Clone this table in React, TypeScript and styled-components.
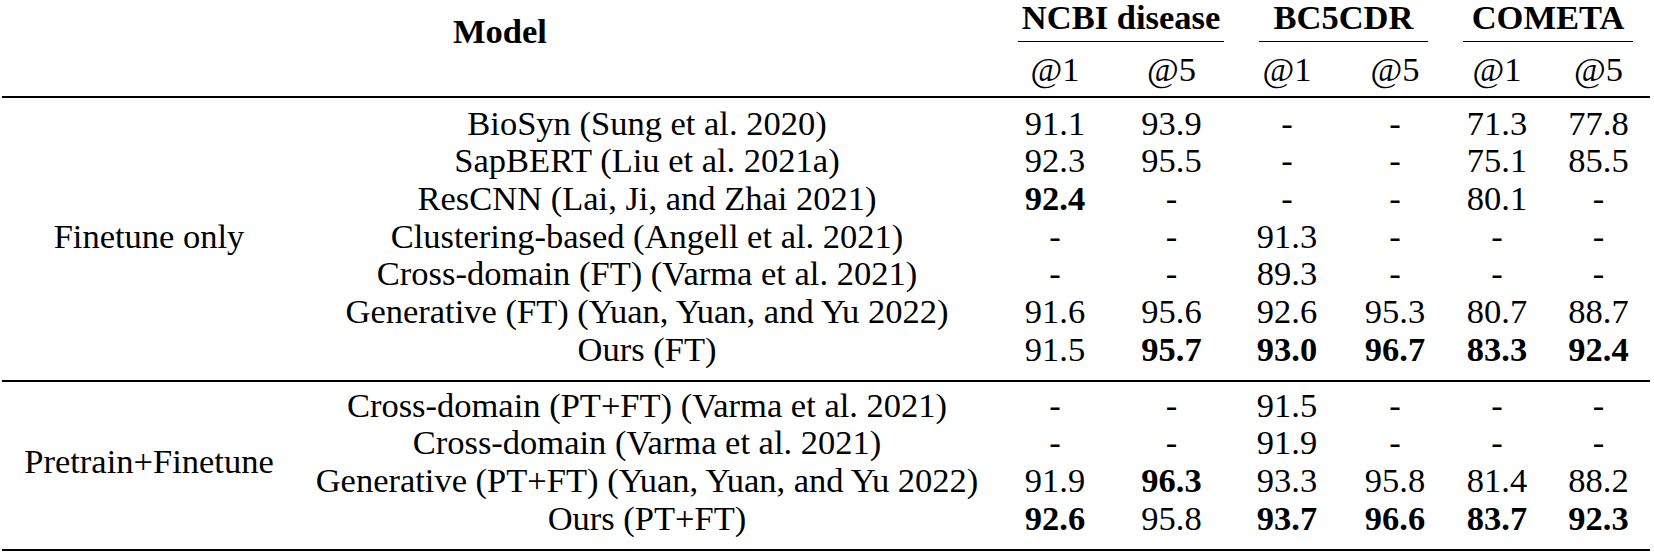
import React from 'react';
import styled, { createGlobalStyle } from 'styled-components';

const COLUMNS = '294px 702px 114px 119px 112px 104px 100px 103px';

type Row = { name: string; scores: string[]; bold?: number[] };
type Group = { label: string; padTop: number; padBottom: number; rows: Row[] };

const DATASETS = [
  { name: 'NCBI disease', ml: 20, mr: 7 },
  { name: 'BC5CDR', ml: 28, mr: 19 },
  { name: 'COMETA', ml: 16, mr: 17 },
];

const GROUPS: Group[] = [
  {
    label: 'Finetune only',
    padTop: 7,
    padBottom: 11,
    rows: [
      { name: 'BioSyn (Sung et al. 2020)', scores: ['91.1', '93.9', '-', '-', '71.3', '77.8'] },
      { name: 'SapBERT (Liu et al. 2021a)', scores: ['92.3', '95.5', '-', '-', '75.1', '85.5'] },
      { name: 'ResCNN (Lai, Ji, and Zhai 2021)', scores: ['92.4', '-', '-', '-', '80.1', '-'], bold: [0] },
      { name: 'Clustering-based (Angell et al. 2021)', scores: ['-', '-', '91.3', '-', '-', '-'] },
      { name: 'Cross-domain (FT) (Varma et al. 2021)', scores: ['-', '-', '89.3', '-', '-', '-'] },
      {
        name: 'Generative (FT) (Yuan, Yuan, and Yu 2022)',
        scores: ['91.6', '95.6', '92.6', '95.3', '80.7', '88.7'],
      },
      { name: 'Ours (FT)', scores: ['91.5', '95.7', '93.0', '96.7', '83.3', '92.4'], bold: [1, 2, 3, 4, 5] },
    ],
  },
  {
    label: 'Pretrain+Finetune',
    padTop: 5,
    padBottom: 12,
    rows: [
      { name: 'Cross-domain (PT+FT) (Varma et al. 2021)', scores: ['-', '-', '91.5', '-', '-', '-'] },
      { name: 'Cross-domain (Varma et al. 2021)', scores: ['-', '-', '91.9', '-', '-', '-'] },
      {
        name: 'Generative (PT+FT) (Yuan, Yuan, and Yu 2022)',
        scores: ['91.9', '96.3', '93.3', '95.8', '81.4', '88.2'],
        bold: [1],
      },
      { name: 'Ours (PT+FT)', scores: ['92.6', '95.8', '93.7', '96.6', '83.7', '92.3'], bold: [0, 2, 3, 4, 5] },
    ],
  },
];

const App = () => {
  return (
    <>
      <GlobalStyle />
      <Page>
        <Table>
          <Header>
            <ModelHead>Model</ModelHead>
            {DATASETS.map((d) => (
              <DatasetHead key={d.name} $ml={d.ml} $mr={d.mr}>
                {d.name}
              </DatasetHead>
            ))}
            {DATASETS.map((d) => (
              <React.Fragment key={d.name}>
                <MetricHead>@1</MetricHead>
                <MetricHead>@5</MetricHead>
              </React.Fragment>
            ))}
          </Header>
          <Rule />
          {GROUPS.map((g) => (
            <React.Fragment key={g.label}>
              <Body $padTop={g.padTop} $padBottom={g.padBottom}>
                <GroupLabel $rows={g.rows.length}>{g.label}</GroupLabel>
                {g.rows.map((r) => (
                  <React.Fragment key={r.name}>
                    <ModelName>{r.name}</ModelName>
                    {r.scores.map((s, i) => (
                      <Score key={i} $bold={r.bold?.includes(i)}>
                        {s}
                      </Score>
                    ))}
                  </React.Fragment>
                ))}
              </Body>
              <Rule />
            </React.Fragment>
          ))}
        </Table>
      </Page>
    </>
  );
};

export default App;

const GlobalStyle = createGlobalStyle`
  html, body {
    margin: 0;
    padding: 0;
    background: #fff;
  }
  body {
    font-family: 'Liberation Serif', 'Times New Roman', serif;
    color: #000;
  }
`;

const Page = styled.div`
  width: 1654px;
  height: 553px;
  padding-left: 2px;
  box-sizing: border-box;
  overflow: hidden;
`;

const Table = styled.div`
  width: 1648px;
  font-size: 34.5px;
`;

const Header = styled.div`
  display: grid;
  grid-template-columns: ${COLUMNS};
  padding-bottom: 7px;
`;

const ModelHead = styled.div`
  grid-column: 1 / span 2;
  grid-row: 1 / span 2;
  align-self: start;
  padding-top: 13px;
  text-align: center;
  font-weight: bold;
  line-height: 37.7px;
`;

// cmidrule under each dataset name, trimmed per column pair
const DatasetHead = styled.div<{ $ml: number; $mr: number }>`
  grid-column: span 2;
  grid-row: 1;
  margin: 0 ${(p) => p.$mr}px 0 ${(p) => p.$ml}px;
  padding-top: 2px;
  padding-bottom: 9px;
  border-bottom: 1px solid #000;
  text-align: center;
  font-weight: bold;
  line-height: 30px;
  white-space: nowrap;
`;

const MetricHead = styled.div`
  grid-row: 2;
  margin-top: 9px;
  text-align: center;
  line-height: 37.7px;
`;

const Rule = styled.div`
  height: 2px;
  background: #000;
`;

const Body = styled.div<{ $padTop: number; $padBottom: number }>`
  display: grid;
  grid-template-columns: ${COLUMNS};
  grid-auto-rows: 37.7px;
  padding: ${(p) => p.$padTop}px 0 ${(p) => p.$padBottom}px;
  line-height: 37.7px;
`;

const GroupLabel = styled.div<{ $rows: number }>`
  grid-column: 1;
  grid-row: 1 / span ${(p) => p.$rows};
  align-self: center;
  text-align: center;
`;

const ModelName = styled.div`
  grid-column: 2;
  text-align: center;
  white-space: nowrap;
`;

const Score = styled.div<{ $bold?: boolean }>`
  text-align: center;
  font-weight: ${(p) => (p.$bold ? 'bold' : 'normal')};
`;
